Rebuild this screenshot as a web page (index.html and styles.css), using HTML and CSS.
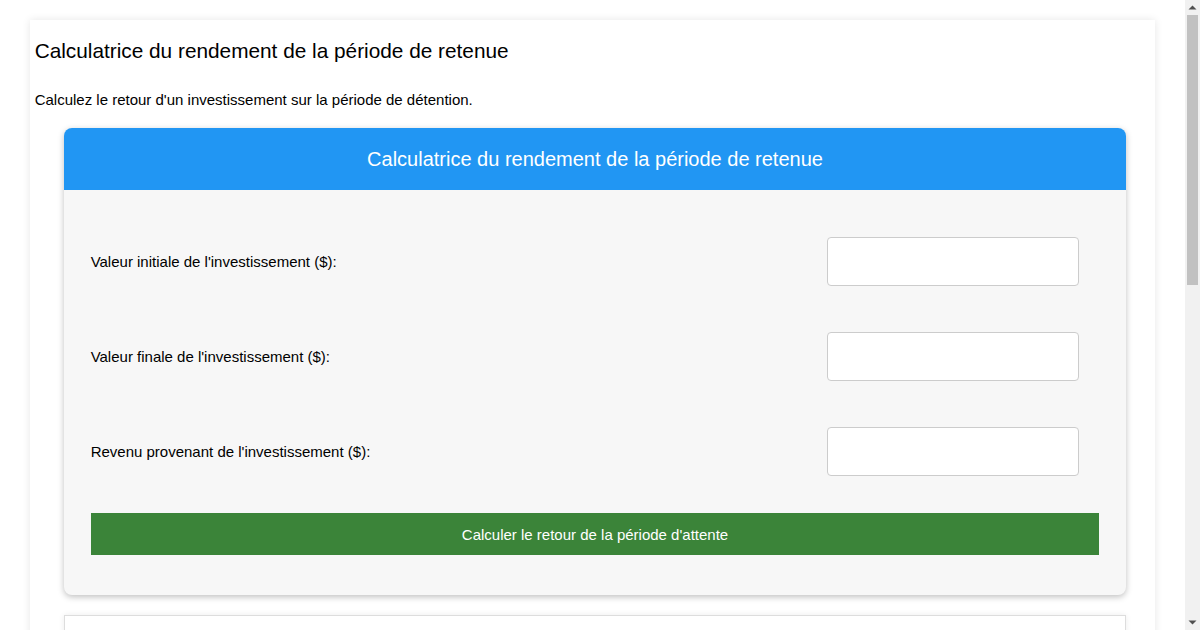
FILE: index.html
```html
<!DOCTYPE html>
<html>

<head>
    <meta charset="utf-8">
    <title>Calculatrice du rendement de la période de retenue</title>
    <link rel="stylesheet" href="styles.css">
</head>

<body>
    <div class="container">
        <h2 class="page-title">Calculatrice du rendement de la période de retenue</h2>
        <p class="intro">Calculez le retour d'un investissement sur la période de détention.</p>

        <div class="calc">
            <div class="calc-header">Calculatrice du rendement de la période de retenue</div>
            <div class="calc-body">
                <div class="row">
                    <label for="initial">Valeur initiale de l'investissement ($):</label>
                    <input type="text" id="initial">
                </div>
                <div class="row">
                    <label for="final">Valeur finale de l'investissement ($):</label>
                    <input type="text" id="final">
                </div>
                <div class="row">
                    <label for="income">Revenu provenant de l'investissement ($):</label>
                    <input type="text" id="income">
                </div>
                <button class="calc-btn">Calculer le retour de la période d'attente</button>
            </div>
        </div>

        <div class="result">
            <p>Le rendement de la période de détention apparaîtra ici.</p>
        </div>
    </div>

    <!-- barre de défilement -->
    <div class="scrollbar">
        <svg class="arrow up" width="15" height="15" viewBox="0 0 15 15"><path d="M3.5 9.5 L7.5 5.5 L11.5 9.5 Z" fill="#505050"/></svg>
        <div class="thumb"></div>
        <svg class="arrow down" width="15" height="15" viewBox="0 0 15 15"><path d="M3.5 5.5 L7.5 9.5 L11.5 5.5 Z" fill="#505050"/></svg>
    </div>
</body>

</html>
```

FILE: styles.css
```css
* {
    box-sizing: border-box;
}

body {
    margin: 0 15px 0 0;
    font-family: "Liberation Sans", Arial, sans-serif;
    color: #000;
    background: #fff;
}

.container {
    width: 95%;
    margin: 20px auto;
    padding: 5px 0 20px 5px;
    background: #fff;
    box-shadow: 0 0 8px rgba(0, 0, 0, .1);
}

.page-title {
    margin: 14px 0 28px;
    font-size: 20.8px;
    font-weight: normal;
}

.intro {
    margin: 0 0 20px;
    font-size: 15px;
}

.calc {
    margin: 0 29px;
    border-radius: 8px;
    background: #f7f7f7;
    box-shadow: 0 2px 6px rgba(0, 0, 0, .25);
    overflow: hidden;
}

.calc-header {
    height: 62px;
    line-height: 62px;
    text-align: center;
    font-size: 20px;
    color: #fff;
    background: #2196f3;
}

.calc-body {
    padding: 27px 27px 40px;
}

.row {
    display: flex;
    align-items: center;
    justify-content: space-between;
    padding: 20px 0;
    margin-bottom: 6px;
}

.row label {
    font-size: 15px;
}

.row input {
    width: 252px;
    height: 49px;
    margin-right: 20px;
    border: 1px solid #ccc;
    border-radius: 4px;
    background: #fff;
    font-size: 15px;
}

.calc-btn {
    display: block;
    width: 100%;
    height: 42px;
    margin-top: 17px;
    border: none;
    background: #3b8439;
    color: #fff;
    font-family: inherit;
    font-size: 15px;
    cursor: pointer;
}

.result {
    margin: 20px 29px 0;
    padding: 26px 27px;
    border: 1px solid #ddd;
    background: #fff;
    box-shadow: 0 0 6px rgba(0, 0, 0, .08);
    font-size: 15px;
}

.result p {
    margin: 0;
}

.scrollbar {
    position: fixed;
    top: 0;
    right: 0;
    width: 15px;
    height: 100%;
    background: #f1f1f1;
    display: flex;
    flex-direction: column;
}

.scrollbar .arrow {
    display: block;
    flex: none;
}

.scrollbar .thumb {
    height: 270px;
    margin: 0 2px;
    background: #c1c1c1;
}

.scrollbar .down {
    margin-top: auto;
}
```
